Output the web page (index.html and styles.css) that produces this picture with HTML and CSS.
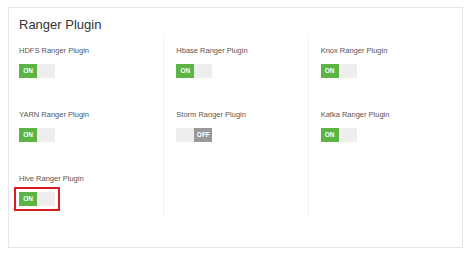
FILE: index.html
```html
<!DOCTYPE html>
<html lang="en">
<head>
    <meta charset="UTF-8">
    <title>Ranger Plugin</title>
    <link rel="stylesheet" href="styles.css">
</head>
<body>
    <div class="panel">
        <h2>Ranger Plugin</h2>
        <div class="plugins">
            <div class="col">
                <div class="plugin">
                    <label>HDFS Ranger Plugin</label>
                    <div class="toggle on"><span class="knob">ON</span><span class="rest"></span></div>
                </div>
                <div class="plugin">
                    <label>YARN Ranger Plugin</label>
                    <div class="toggle on"><span class="knob">ON</span><span class="rest"></span></div>
                </div>
                <div class="plugin">
                    <label>Hive Ranger Plugin</label>
                    <div class="toggle on marked"><span class="knob">ON</span><span class="rest"></span></div>
                </div>
            </div>
            <div class="col">
                <div class="plugin">
                    <label>Hbase Ranger Plugin</label>
                    <div class="toggle on"><span class="knob">ON</span><span class="rest"></span></div>
                </div>
                <div class="plugin">
                    <label>Storm Ranger Plugin</label>
                    <div class="toggle off"><span class="rest"></span><span class="knob">OFF</span></div>
                </div>
            </div>
            <div class="col">
                <div class="plugin">
                    <label>Knox Ranger Plugin</label>
                    <div class="toggle on"><span class="knob">ON</span><span class="rest"></span></div>
                </div>
                <div class="plugin">
                    <label>Kafka Ranger Plugin</label>
                    <div class="toggle on"><span class="knob">ON</span><span class="rest"></span></div>
                </div>
            </div>
        </div>
    </div>
</body>
</html>
```

FILE: styles.css
```css
body {
    margin: 0;
    padding: 7px 11px 8px 8px;
    background: white;
    font-family: "Liberation Sans", Arial, sans-serif;
}
.panel {
    border: 1px solid #e6e6e6;
    padding: 0 10px 30px 10px;
    height: 209px;
}
h2 {
    margin: 0;
    padding-top: 9px;
    height: 21px;
    font-size: 13px;
    font-weight: normal;
    color: #333;
    line-height: 16px;
}
.plugins {
    display: grid;
    grid-template-columns: 1fr 1fr 1fr;
    height: 177px;
}
.col {
    display: flex;
    flex-direction: column;
    gap: 14px;
    padding-left: 12px;
    border-left: 1px solid #efefef;
}
.col:first-child {
    padding-left: 0;
    border-left: none;
}
.plugin {
    height: 50px;
}
label {
    display: block;
    font-size: 7.5px;
    color: #555;
    line-height: 12px;
    margin-top: 7px;
    margin-bottom: 7px;
}
.toggle {
    display: flex;
    width: 36px;
    height: 14px;
}
.toggle span {
    width: 18px;
    height: 14px;
    font-size: 6.5px;
    font-weight: bold;
    color: white;
    line-height: 14px;
    text-align: center;
}
.toggle .rest {
    background: #eeeeee;
}
.on .knob {
    background: #5cb445;
}
.off .knob {
    background: #999999;
}
.marked {
    outline: 2px solid #da1c22;
    outline-offset: 3px;
}
```
